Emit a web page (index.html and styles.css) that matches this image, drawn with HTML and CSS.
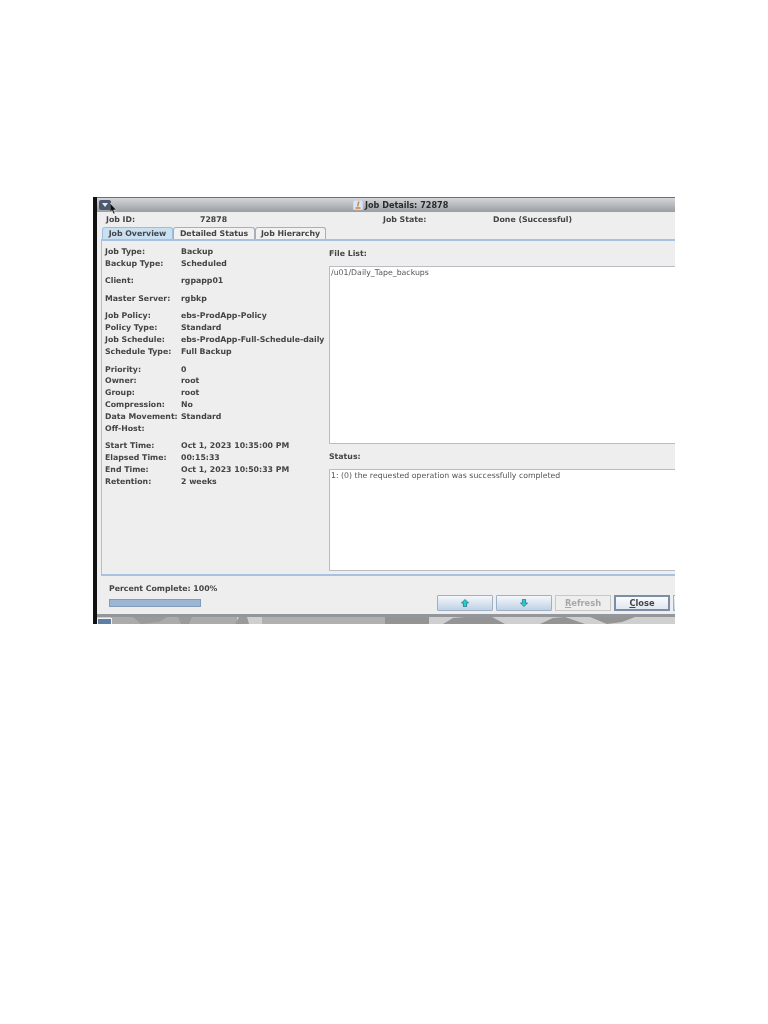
FILE: index.html
```html
<!DOCTYPE html>
<html lang="en">
<head>
    <meta charset="UTF-8">
    <title>Job Details: 72878</title>
    <link rel="stylesheet" href="styles.css">
</head>
<body>
    <div class="window">
        <div class="titlebar">
            <div class="menu-btn">
                <svg width="6" height="4" viewBox="0 0 6 4"><path d="M0 0H6L3 4Z" fill="#e8ecf2"/></svg>
            </div>
            <svg class="cursor" width="7" height="11" viewBox="0 0 7 11"><path d="M0 0V9L2 7.500 3.500 11 5 10.300 3.500 7H6.500Z" fill="#111" stroke="#fff" stroke-width=".5"/></svg>
            <div class="title">
                <svg width="10" height="10" viewBox="0 0 10 10"><rect width="10" height="10" rx="1" fill="#dce6f2" stroke="#a8b8cc" stroke-width=".6"/><path d="M2.500 8h5M5.500 1.500C6.500 3.500 3.800 4 5 6.500" fill="none" stroke="#dc7a30" stroke-width="1.400"/></svg>
                <span>Job Details: 72878</span>
            </div>
        </div>

        <div class="job-info">
            <span class="job-id-label">Job ID:</span>
            <span class="job-id">72878</span>
            <span class="job-state-label">Job State:</span>
            <span>Done (Successful)</span>
        </div>

        <div class="tabs">
            <div class="tab active">Job Overview</div>
            <div class="tab tab-status">Detailed Status</div>
            <div class="tab tab-hierarchy">Job Hierarchy</div>
        </div>

        <div class="panel">
            <div class="details">
                <div class="group">
                    <div class="row"><span class="label">Job Type:</span><span>Backup</span></div>
                    <div class="row"><span class="label">Backup Type:</span><span>Scheduled</span></div>
                </div>
                <div class="group">
                    <div class="row"><span class="label">Client:</span><span>rgpapp01</span></div>
                </div>
                <div class="group">
                    <div class="row"><span class="label">Master Server:</span><span>rgbkp</span></div>
                </div>
                <div class="group">
                    <div class="row"><span class="label">Job Policy:</span><span>ebs-ProdApp-Policy</span></div>
                    <div class="row"><span class="label">Policy Type:</span><span>Standard</span></div>
                    <div class="row"><span class="label">Job Schedule:</span><span>ebs-ProdApp-Full-Schedule-daily</span></div>
                    <div class="row"><span class="label">Schedule Type:</span><span>Full Backup</span></div>
                </div>
                <div class="group">
                    <div class="row"><span class="label">Priority:</span><span>0</span></div>
                    <div class="row"><span class="label">Owner:</span><span>root</span></div>
                    <div class="row"><span class="label">Group:</span><span>root</span></div>
                    <div class="row"><span class="label">Compression:</span><span>No</span></div>
                    <div class="row"><span class="label">Data Movement:</span><span>Standard</span></div>
                    <div class="row"><span class="label">Off-Host:</span><span></span></div>
                </div>
                <div class="group">
                    <div class="row"><span class="label">Start Time:</span><span>Oct 1, 2023 10:35:00 PM</span></div>
                    <div class="row"><span class="label">Elapsed Time:</span><span>00:15:33</span></div>
                    <div class="row"><span class="label">End Time:</span><span>Oct 1, 2023 10:50:33 PM</span></div>
                    <div class="row"><span class="label">Retention:</span><span>2 weeks</span></div>
                </div>
            </div>
            <div class="lists">
                <div class="list-label">File List:</div>
                <div class="list-box file-box">/u01/Daily_Tape_backups</div>
                <div class="list-label status-label">Status:</div>
                <div class="list-box status-box">1: (0) the requested operation was successfully completed</div>
            </div>
        </div>

        <div class="footer">
            <div class="progress-area">
                <div class="percent">Percent Complete: 100%</div>
                <div class="progress"></div>
            </div>
            <div class="buttons">
                <button class="btn arrow-btn">
                    <svg width="8" height="8" viewBox="0 0 9 9"><path d="M4.500 .5L8.500 4.500H6.300V8.500H2.700V4.500H.5Z" fill="#1fd0d0" stroke="#1c5a66" stroke-width=".7"/></svg>
                </button>
                <button class="btn arrow-btn">
                    <svg width="8" height="8" viewBox="0 0 9 9"><path d="M4.500 8.500L.5 4.500H2.700V.5H6.300V4.500H8.500Z" fill="#1fd0d0" stroke="#1c5a66" stroke-width=".7"/></svg>
                </button>
                <button class="btn refresh" disabled><u>R</u>efresh</button>
                <button class="btn close"><u>C</u>lose</button>
                <button class="btn cut-off"></button>
            </div>
        </div>

        <div class="desktop-strip">
            <svg class="wallpaper" width="578" height="7" viewBox="0 0 578 7">
                <path d="M14 0H140V7H14Z" fill="#ababab"/>
                <path d="M36 0H70L62 5 44 7ZM81 0H95L92 7H84ZM138 7L142 0H150L152 7Z" fill="#9a9a9a"/>
                <path d="M165 0H288V7H165Z" fill="#b0b0b0"/>
                <path d="M288 0H332V7H288ZM346 7L356 1 368 0H395L408 7ZM443 7L456 1 468 0 488 7ZM493 0H538L525 5 510 7Z" fill="#949494"/>
            </svg>
            <div class="taskbar-btn"></div>
        </div>
    </div>
</body>
</html>
```

FILE: styles.css
```css
/* Page */
body {
    margin: 0;
    padding: 197px 0 0 93px;
    background-color: #ffffff;
    font-family: "DejaVu Sans", sans-serif;
    font-size: 7.8px;
    font-weight: bold;
    color: #444444;
}

/* Window */
.window {
    position: relative;
    width: 578px;
    height: 427px;
    border-left: 4px solid #111111;
    background-color: #eeeeee;
    overflow: hidden;
    display: flex;
    flex-direction: column;
    filter: blur(0.4px);
}

.titlebar {
    height: 14px;
    flex: none;
    display: flex;
    align-items: center;
    border-top: 1px solid #6c7074;
    background: linear-gradient(#d4d6d9, #9a9da2);
}

.menu-btn {
    width: 12px;
    height: 10px;
    margin-left: 2px;
    flex: none;
    display: flex;
    align-items: center;
    justify-content: center;
    border-radius: 2px;
    background-color: #4c5a70;
}

.cursor {
    position: absolute;
    left: 13px;
    top: 6px;
}

.title {
    margin-left: 242px;
    display: flex;
    align-items: center;
    gap: 2px;
    font-size: 8.1px;
    color: #2a2a2a;
}

/* Job id row */
.job-info {
    height: 15px;
    flex: none;
    display: flex;
    align-items: center;
    padding-left: 9px;
}

.job-id-label {
    width: 94px;
}

.job-id {
    width: 183px;
}

.job-state-label {
    width: 110px;
}

/* Tabs */
.tabs {
    height: 12px;
    flex: none;
    display: flex;
    align-items: flex-end;
    padding-left: 5px;
}

.tab {
    height: 12px;
    line-height: 12px;
    box-sizing: border-box;
    border: 1px solid #a9afb6;
    border-bottom: none;
    border-radius: 3px 3px 0 0;
    background-color: #f1f1f1;
    text-align: center;
    white-space: nowrap;
}

.tab.active {
    width: 71px;
    border-color: #9fbcdc;
    background-color: #c9dff2;
}

.tab-status {
    width: 82px;
}

.tab-hierarchy {
    width: 71px;
}

/* Main panel */
.panel {
    height: 337px;
    margin-left: 4px;
    flex: none;
    display: flex;
    box-sizing: border-box;
    border: 1px solid #a6c2e0;
    border-width: 2px 0 2px 1px;
}

.details {
    width: 224px;
    flex: none;
    padding: 5px 0 0 3px;
    display: flex;
    flex-direction: column;
    gap: 5.6px;
}

.row {
    display: flex;
    height: 11.9px;
    line-height: 12px;
    white-space: nowrap;
}

.label {
    width: 76px;
    flex: none;
}

.lists {
    flex: 1;
    display: flex;
    flex-direction: column;
    margin-right: -2px;
}

.list-label {
    height: 25px;
    line-height: 26px;
    flex: none;
}

.status-label {
    height: 25px;
}

.list-box {
    box-sizing: border-box;
    padding: 0 1px;
    line-height: 12px;
    border: 1px solid #b9bcc0;
    background-color: #ffffff;
    font-weight: normal;
    color: #555555;
    flex: none;
}

.file-box {
    height: 178px;
}

.status-box {
    height: 102px;
}

/* Footer */
.footer {
    height: 41px;
    flex: none;
    display: flex;
    justify-content: space-between;
    border-bottom: 3px solid #93979c;
    box-sizing: border-box;
}

.progress-area {
    padding: 7px 0 0 12px;
}

.percent {
    line-height: 12px;
}

.progress {
    width: 92px;
    height: 8px;
    margin-top: 4px;
    border: 1px solid #7f9cbc;
    box-sizing: border-box;
    background-color: #9db6d2;
}

.buttons {
    display: flex;
    gap: 3px;
    padding-top: 19px;
    margin-right: -8px;
}

.btn {
    width: 56px;
    height: 16px;
    padding: 0;
    display: flex;
    align-items: center;
    justify-content: center;
    border: 1px solid #9db0c6;
    background: linear-gradient(#f4f7fb, #bfd2e4);
    font: inherit;
    font-size: 8.3px;
    color: inherit;
}

.arrow-btn {
    border-radius: 1px;
}

.refresh {
    border-color: #c8c8c8;
    background: #eeeeee;
    color: #a8a8a8;
}

.close {
    border: 2px solid #7c8ea4;
    background: linear-gradient(#fafbfd, #dfe7f0);
}

.cut-off {
    width: 10px;
    flex: none;
}

/* Desktop visible below the window */
.desktop-strip {
    flex: 1;
    position: relative;
    background-color: #cfcfcf;
}

.wallpaper {
    display: block;
}

.taskbar-btn {
    position: absolute;
    left: 0;
    top: 1px;
    width: 13px;
    height: 6px;
    border: 1px solid #f2f2f2;
    border-bottom: none;
    background-color: #5f7ea6;
}
```
